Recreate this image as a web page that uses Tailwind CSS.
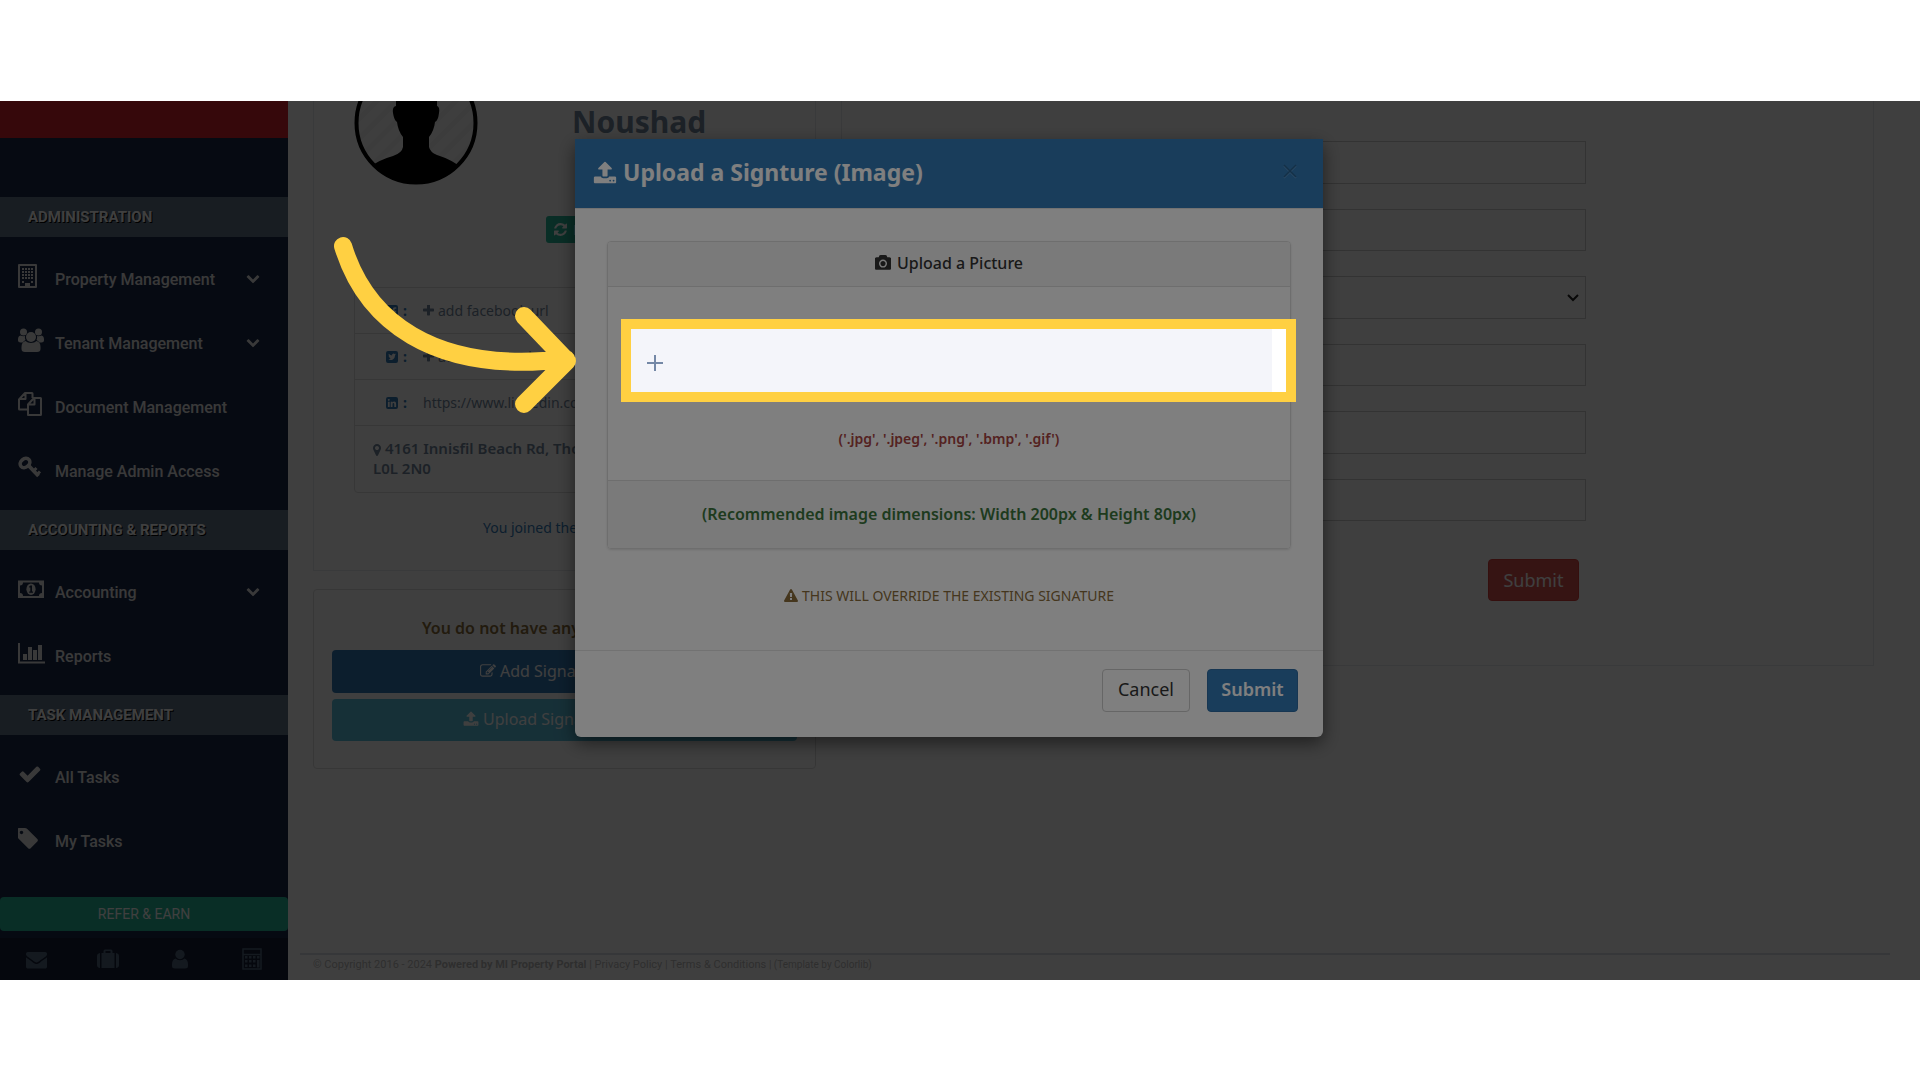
<!DOCTYPE html>
<html lang="en">
<head>
  <meta charset="UTF-8" />
  <meta name="viewport" content="width=device-width, initial-scale=1.0"/>
  <title>MI Property Portal</title>
  <script src="https://cdn.jsdelivr.net/npm/@tailwindcss/browser@4"></script>
</head>
<body class="bg-white py-[101px] font-['Noto_Sans',sans-serif] text-[14px] text-[#73879c]">

  <!-- Icons -->
  <svg class="hidden">
    <symbol id="i-upload" viewBox="0 0 1792 1792"><path d="M1344 1472q0-26-19-45t-45-19-45 19-19 45 19 45 45 19 45-19 19-45zm256 0q0-26-19-45t-45-19-45 19-19 45 19 45 45 19 45-19 19-45zm128-224v320q0 40-28 68t-68 28h-1472q-40 0-68-28t-28-68v-320q0-40 28-68t68-28h427q21 56 70.500 92t110.500 36h256q61 0 110.500-36t70.500-92h427q40 0 68 28t28 68zm-325-648q-17 40-59 40h-256v448q0 26-19 45t-45 19h-256q-26 0-45-19t-19-45v-448h-256q-42 0-59-40-17-39 14-69l448-448q18-19 45-19t45 19l448 448q31 30 14 69z"/></symbol>
    <symbol id="i-camera" viewBox="0 0 1792 1792"><path d="M896 672q119 0 203.500 84.500t84.500 203.500-84.500 203.500-203.500 84.500-203.500-84.500-84.500-203.500 84.500-203.500 203.500-84.500zm704-416q106 0 181 75t75 181v896q0 106-75 181t-181 75h-1408q-106 0-181-75t-75-181v-896q0-106 75-181t181-75h224l51-136q19-49 69.500-84.500t103.500-35.500h512q53 0 103.500 35.500t69.500 84.500l51 136h224zm-704 1152q185 0 316.500-131.500t131.500-316.500-131.500-316.500-316.500-131.500-316.500 131.500-131.500 316.500 131.500 316.500 316.500 131.500z"/></symbol>
    <symbol id="i-warning" viewBox="0 0 1792 1792"><path d="M1024 1375v-190q0-14-9.500-23.500t-22.500-9.500h-192q-13 0-22.500 9.500t-9.500 23.500v190q0 14 9.500 23.500t22.500 9.500h192q13 0 22.500-9.500t9.500-23.500zm-2-374l18-459q0-12-10-19-13-11-24-11h-220q-11 0-24 11-10 7-10 21l17 457q0 10 10 16.500t24 6.500h185q14 0 23.500-6.500t10.500-16.500zm-14-934l768 1408q35 63-2 126-17 29-46.500 46t-63.500 17h-1536q-34 0-63.500-17t-46.500-46q-37-63-2-126l768-1408q17-31 47-49t65-18 65 18 47 49z"/></symbol>
    <symbol id="i-check" viewBox="0 0 1792 1792"><path d="M1671 566q0 40-28 68l-724 724-136 136q-28 28-68 28t-68-28l-136-136-362-362q-28-28-28-68t28-68l136-136q28-28 68-28t68 28l294 295 656-657q28-28 68-28t68 28l136 136q28 28 28 68z"/></symbol>
    <symbol id="i-tag" viewBox="192 128 1536 1536"><path d="M576 448q0-53-37.500-90.500t-90.500-37.500-90.500 37.500-37.500 90.500 37.500 90.500 90.500 37.500 90.500-37.500 37.500-90.500zm1067 576q0 53-37 90l-491 492q-39 37-91 37-53 0-90-37l-715-716q-38-37-64.500-101t-26.500-117v-416q0-52 38-90t90-38h416q53 0 117 26.500t102 64.500l715 714q37 39 37 91z"/></symbol>
    <symbol id="i-mail" viewBox="0 0 1792 1792"><path d="M1792 710v794q0 66-47 113t-113 47h-1472q-66 0-113-47t-47-113v-794q44 49 101 87 362 246 497 345 57 42 92.500 65.500t94.500 48 110 24.500h2q51 0 110-24.500t94.500-48 92.500-65.500q170-123 498-345 57-39 100-87zm0-294q0 79-49 151t-122 123q-376 261-468 325-10 7-42.500 31t-54 38.500-52 32.500-57.500 27-50 9h-2q-23 0-50-9t-57.500-27-52-32.500-54-38.500-42.500-31q-91-64-262-182.500t-205-142.500q-62-42-117-115.500t-55-136.500q0-78 41.500-130t118.500-52h1472q65 0 112.500 47t47.500 113z"/></symbol>
    <symbol id="i-down" viewBox="0 0 1792 1792"><path d="M1683 808l-742 741q-19 19-45 19t-45-19l-742-741q-19-19-19-45.500t19-45.500l166-165q19-19 45-19t45 19l531 531 531-531q19-19 45-19t45 19l166 165q19 19 19 45.500t-19 45.500z"/></symbol>
    <symbol id="i-marker" viewBox="384 128 1024 1536"><path d="M1152 640q0-106-75-181t-181-75-181 75-75 181 75 181 181 75 181-75 75-181zm256 0q0 109-33 179l-364 774q-16 33-47.500 52t-67.500 19-67.500-19-46.500-52l-365-774q-33-70-33-179 0-212 150-362t362-150 362 150 150 362z"/></symbol>
    <symbol id="i-edit" viewBox="0 0 1792 1792"><path d="M888 1184l116-116-152-152-116 116v56h96v96h56zm440-720q-16-16-33 1l-350 350q-17 17-1 33t33-1l350-350q17-17 1-33zm80 594v190q0 119-84.500 203.500t-203.500 84.500h-832q-119 0-203.500-84.500t-84.500-203.500v-832q0-119 84.500-203.500t203.500-84.500h832q63 0 117 25 15 7 18 23 3 17-9 29l-49 49q-14 14-32 8-23-6-45-6h-832q-66 0-113 47t-47 113v832q0 66 47 113t113 47h832q66 0 113-47t47-113v-126q0-13 9-22l64-64q15-15 35-7t20 29zm-96-738l288 288-672 672h-288v-288zm444 132l-92 92-288-288 92-92q28-28 68-28t68 28l152 152q28 28 28 68t-28 68z"/></symbol>
    <symbol id="i-refresh" viewBox="128 128 1536 1536"><path d="M1639 1056q0 5-1 7-64 268-268 434.500t-478 166.500q-146 0-282.500-55t-243.500-157l-129 129q-19 19-45 19t-45-19-19-45v-448q0-26 19-45t45-19h448q26 0 45 19t19 45-19 45l-137 137q71 66 161 102t187 36q134 0 250-65t186-179q11-17 53-117 8-23 30-23h192q13 0 22.500 9.500t9.500 22.500zm25-800v448q0 26-19 45t-45 19h-448q-26 0-45-19t-19-45 19-45l138-138q-148-137-349-137-134 0-250 65t-186 179q-11 17-53 117-8 23-30 23h-199q-13 0-22.500-9.500t-9.500-22.500v-7q65-268 270-434.500t480-166.500q146 0 284 55.500t245 156.500l130-129q19-19 45-19t45 19 19 45z"/></symbol>
    <symbol id="i-plus" viewBox="192 192 1408 1408"><path d="M1600 736v192q0 40-28 68t-68 28h-416v416q0 40-28 68t-68 28h-192q-40 0-68-28t-28-68v-416h-416q-40 0-68-28t-28-68v-192q0-40 28-68t68-28h416v-416q0-40 28-68t68-28h192q40 0 68 28t28 68v416h416q40 0 68 28t28 68z"/></symbol>
    <symbol id="i-building" viewBox="0 0 28 24"><path fill-rule="evenodd" d="M1 0h17q1 0 1 1v22q0 1-1 1h-17q-1 0-1-1v-22q0-1 1-1zM2 2v20h5v-3h5v3h5v-20z"/><path d="M4 4h2v2h-2zM7 4h2v2h-2zM10 4h2v2h-2zM13 4h2v2h-2zM4 7h2v2h-2zM7 7h2v2h-2zM10 7h2v2h-2zM13 7h2v2h-2zM4 10h2v2h-2zM7 10h2v2h-2zM10 10h2v2h-2zM13 10h2v2h-2zM4 13h2v2h-2zM7 13h2v2h-2zM10 13h2v2h-2zM13 13h2v2h-2zM4 17h2v2h-2zM13 17h2v2h-2z"/></symbol>
    <symbol id="i-users" viewBox="0 0 28 24"><circle cx="5.500" cy="4" r="3.500"/><circle cx="20.500" cy="4" r="3.500"/><circle cx="13" cy="9" r="5"/><path d="M7.500 13q-4 1-4 6v2q0 3 3.500 3h12q3.500 0 3.500-3v-2q0-5-4-6-2 2-5.500 2t-5.500-2zM2.500 7.500q-2.500 .5-2.500 4v1q0 2 2.500 2h2q1-1.500 3-2.500-1-2-.5-4-2.500 .5-4.500-.5zM23.500 7.500q2.500 .5 2.500 4v1q0 2-2.500 2h-2q-1-1.500-3-2.500 1-2 .5-4 2.500 .5 4.500-.5z"/></symbol>
    <symbol id="i-files" viewBox="0 0 28 24"><path fill="none" stroke="currentColor" stroke-width="2" stroke-linejoin="round" d="M9 17.500h-7.500q-.5 0-.5-.5v-9.500l6-6.500h7q.5 0 .5.500v4.500M7.500 1.500v5.500h-6M10 23v-10.500l6-6.500h6.500q.5 0 .5.500v16q0 .5-.5.500h-12.500zM16.500 6.500v6h-6"/></symbol>
    <symbol id="i-key" viewBox="0 0 28 24"><path fill="none" stroke="currentColor" stroke-width="3.800" d="M11 10l9.500 10"/><path fill="none" stroke="currentColor" stroke-width="3" d="M15 15.500l3.500-3.500M18.500 19l3.500-3.500"/><ellipse cx="7" cy="7" rx="5.200" ry="4.200" transform="rotate(-40 7 7)" fill="none" stroke="currentColor" stroke-width="3.600"/></symbol>
    <symbol id="i-money" viewBox="0 0 28 24"><path fill-rule="evenodd" d="M0 3.500h26v17.500h-26zM5 5.500q0 3-3 3v7.500q3 0 3 3h16q0-3 3-3v-7.500q-3 0-3-3z"/><ellipse cx="13" cy="12.200" rx="4.600" ry="5.800"/><path d="M12.400 8.500h1.600v6h1v1.300h-3.800v-1.300h1.100v-4h-1.100v-1z" fill="#182848"/></symbol>
    <symbol id="i-chart" viewBox="0 0 28 24"><path d="M0 2h2v18.500h25v2h-27zM5 13h4v6h-4zM10 6h4v13h-4zM15 9h4v10h-4zM20 4h4v15h-4z"/></symbol>
    <symbol id="i-suitcase" viewBox="0 0 22 20"><path d="M3 4v15q-3-.5-3-3v-9q0-2.500 3-3zM19 4v15q3-.5 3-3v-9q0-2.500-3-3z"/><path fill-rule="evenodd" d="M4.500 4h2v-2q0-1.500 1.500-1.500h6q1.500 0 1.500 1.500v2h2v15h-13zM8.500 4h5v-2h-5z"/></symbol>
    <symbol id="i-user" viewBox="0 0 16 20"><circle cx="8" cy="5.500" r="4.700"/><path d="M3.500 9.500q-3.500 1-3.500 6v1.500q0 2.500 3 2.500h10q3 0 3-2.500v-1.500q0-5-3.500-6-1.500 1.800-4.500 1.800t-4.500-1.800z"/></symbol>
    <symbol id="i-calc" viewBox="0 0 20 22"><path fill="none" stroke="currentColor" stroke-width="1.500" d="M1 1h18v20h-18zM1 6.500h18"/><path d="M3 8h2.500v2.500h-2.500zM7 8h2.500v2.500h-2.500zM11 8h2.500v2.500h-2.500zM15 8h2.500v2.500h-2.500zM3 12h2.500v2.500h-2.500zM7 12h2.500v2.500h-2.500zM11 12h2.500v2.500h-2.500zM15 12h2.500v7.500h-2.500zM3 16.500h2.500v2.500h-2.500zM7 16.500h2.500v2.500h-2.500zM11 16.500h2.500v2.500h-2.500z"/></symbol>
    <symbol id="i-facebook" viewBox="0 0 12 12"><path fill-rule="evenodd" d="M2 0h8q2 0 2 2v8q0 2-2 2h-1.500v-4.500h1.500l.2-1.800h-1.700v-1q0-.9.900-.9h.9v-1.600h-1.400q-2.200 0-2.200 2.300v1.200h-1.500v1.800h1.500v4.500h-4.700q-2 0-2-2v-8q0-2 2-2z"/></symbol>
    <symbol id="i-twitter" viewBox="0 0 12 12"><path fill-rule="evenodd" d="M2 0h8q2 0 2 2v8q0 2-2 2h-8q-2 0-2-2v-8q0-2 2-2zM10 3.300l-1 .1.600-.8-1 .4q-1.200-1-2.300.2-.4.500-.2 1.200-2-.1-3.300-1.700-.7 1.300.5 2.200l-.7-.2q0 1.200 1.300 1.600h-.7q.3 1 1.500 1.200-1 .8-2.400.7 2.300 1.300 4.500.2 2.200-1.300 2.300-4.200z"/></symbol>
    <symbol id="i-linkedin" viewBox="0 0 12 12"><path fill-rule="evenodd" d="M2 0h8q2 0 2 2v8q0 2-2 2h-8q-2 0-2-2v-8q0-2 2-2zM1.900 4.700v5.300h1.800v-5.300zM2.800 2a.9.900 0 1 0 .01 0zM4.700 4.700v5.300h1.800v-3q0-1 .9-1t.9 1.200v2.800h1.800v-3.200q0-2.200-1.900-2.200-1.100 0-1.700.9v-.8z"/></symbol>
  </svg>

  <div class="relative flex overflow-hidden bg-white">

    <!-- Sidebar -->
    <nav class="w-[288px] shrink-0 bg-[#182848] font-['Roboto',sans-serif] text-[16px] font-medium text-[#e7e7e7]">
      <div class="h-[37px] bg-[#d8202c]"></div>
      <h3 class="mt-[59px] flex h-10 items-center bg-[#60748a] pl-7 text-[15px] font-bold text-white [text-shadow:1px_1px_#000]">ADMINISTRATION</h3>
      <ul class="pt-[11px] pb-[6px]">
        <li><a href="#" class="flex h-16 items-center pl-[18px]"><svg class="mb-2 mr-[9px] h-6 w-7 fill-current"><use href="#i-building"/></svg>Property Management<svg class="mb-1 ml-auto mr-7 size-[14px] fill-current"><use href="#i-down"/></svg></a></li>
        <li><a href="#" class="flex h-16 items-center pl-[18px]"><svg class="mb-2 mr-[9px] h-6 w-7 fill-current"><use href="#i-users"/></svg>Tenant Management<svg class="mb-1 ml-auto mr-7 size-[14px] fill-current"><use href="#i-down"/></svg></a></li>
        <li><a href="#" class="flex h-16 items-center pl-[18px]"><svg class="mb-2 mr-[9px] h-6 w-7 fill-current"><use href="#i-files"/></svg>Document Management</a></li>
        <li><a href="#" class="flex h-16 items-center pl-[18px]"><svg class="mb-2 mr-[9px] h-6 w-7 fill-current"><use href="#i-key"/></svg>Manage Admin Access</a></li>
      </ul>
      <h3 class="flex h-10 items-center bg-[#60748a] pl-7 text-[15px] font-bold text-white [text-shadow:1px_1px_#000]">ACCOUNTING &amp; REPORTS</h3>
      <ul class="pt-[11px] pb-[6px]">
        <li><a href="#" class="flex h-16 items-center pl-[18px]"><svg class="mb-2 mr-[9px] h-6 w-7 fill-current"><use href="#i-money"/></svg>Accounting<svg class="mb-1 ml-auto mr-7 size-[14px] fill-current"><use href="#i-down"/></svg></a></li>
        <li><a href="#" class="flex h-16 items-center pl-[18px]"><svg class="mb-2 mr-[9px] h-6 w-7 fill-current"><use href="#i-chart"/></svg>Reports</a></li>
      </ul>
      <h3 class="flex h-10 items-center bg-[#60748a] pl-7 text-[15px] font-bold text-white [text-shadow:1px_1px_#000]">TASK MANAGEMENT</h3>
      <ul class="pt-[11px] pb-[6px]">
        <li><a href="#" class="flex h-16 items-center pl-[18px]"><svg class="mb-2 mr-[13px] size-6 fill-current"><use href="#i-check"/></svg>All Tasks</a></li>
        <li><a href="#" class="flex h-16 items-center pl-[18px]"><svg class="mb-2 mr-4 size-[21px] fill-current"><use href="#i-tag"/></svg>My Tasks</a></li>
      </ul>
      <a href="#" class="mt-[17px] flex h-[34px] items-center justify-center rounded bg-[#26b99a] text-[14px] font-normal text-white">REFER &amp; EARN</a>
      <div class="mt-[7px] grid h-[42px] grid-cols-4 place-items-center bg-[#141c34] text-[#51677f]">
        <a href="#" aria-label="Mail"><svg class="size-[21px] fill-current"><use href="#i-mail"/></svg></a>
        <a href="#" aria-label="Portfolio"><svg class="h-5 w-[22px] fill-current"><use href="#i-suitcase"/></svg></a>
        <a href="#" aria-label="Profile"><svg class="h-5 w-4 fill-current"><use href="#i-user"/></svg></a>
        <a href="#" aria-label="Calculator"><svg class="h-[22px] w-5 fill-current"><use href="#i-calc"/></svg></a>
      </div>
    </nav>

    <!-- Page content -->
    <main class="flex min-w-0 flex-1 flex-col pl-[25px]">
      <div class="flex items-start gap-[25px] pr-[46px]">
        <div class="w-[503px] shrink-0">
          <section class="h-[470px] border border-t-0 border-[#e6e9ed] px-10">
            <div class="flex h-[114px]">
              <svg class="h-[84px] w-[124px] shrink-0" viewBox="0 40 124 84">
                <defs>
                  <clipPath id="face"><circle cx="62" cy="62" r="60"/></clipPath>
                  <pattern id="lines" width="14" height="14" patternUnits="userSpaceOnUse" patternTransform="rotate(45)"><rect width="14" height="14" fill="#fbfbfb"/><rect width="5" height="14" fill="#f0f0f0"/></pattern>
                </defs>
                <g clip-path="url(#face)">
                  <rect width="124" height="124" fill="url(#lines)"/>
                  <path d="M42 30h41v15q3 1 2 7-1 8-4 9-1 9-6 15v10q1 5 8 8 16 5 26 14v20h-96v-20q11-9 26-13 9-3 10-9v-10q-5-6-6-15-3-2-4-9-1-6 3-7z" fill="#000"/>
                </g>
                <circle cx="62" cy="62" r="59.500" fill="none" stroke="#000" stroke-width="4"/>
              </svg>
              <h2 class="ml-[94px] text-[30px] font-bold leading-[42px] text-[#73879c]">Noushad</h2>
            </div>
            <a href="#" class="ml-[192px] mt-[1px] flex h-[27px] w-[120px] items-center gap-[6px] rounded-[3px] bg-[#26b99a] pl-2 text-white"><svg class="size-[13px] fill-current"><use href="#i-refresh"/></svg>Edit Profile</a>
            <ul class="mt-11 overflow-hidden rounded-b border border-[#ddd]">
              <li class="flex h-[46px] items-center border-b border-[#ddd] pl-[31px]"><svg class="size-3 fill-[#337ab7]"><use href="#i-facebook"/></svg><b class="w-[25px] pl-[5px] text-[#337ab7]">:</b><svg class="mr-1 size-[11px] fill-current"><use href="#i-plus"/></svg>add facebook url</li>
              <li class="flex h-[46px] items-center border-b border-[#ddd] pl-[31px]"><svg class="size-3 fill-[#337ab7]"><use href="#i-twitter"/></svg><b class="w-[25px] pl-[5px] text-[#337ab7]">:</b><svg class="mr-1 size-[11px] fill-current"><use href="#i-plus"/></svg>add twitter url</li>
              <li class="flex h-[46px] items-center border-b border-[#ddd] pl-[31px]"><svg class="size-3 fill-[#337ab7]"><use href="#i-linkedin"/></svg><b class="w-[25px] pl-[5px] text-[#337ab7]">:</b>https://www.linkedin.com</li>
              <li class="h-[66px] pl-[18px] pt-3 text-[15px] font-semibold leading-5"><svg class="mr-1 inline h-3 w-2 fill-current"><use href="#i-marker"/></svg>4161 Innisfil Beach Rd, Thornton, ON<br>L0L 2N0</li>
            </ul>
            <p class="pl-[129px] pt-6 text-[#337ab7]">You joined the portal</p>
          </section>
          <section class="mt-[18px] h-[180px] rounded border border-[#ddd] px-[18px] pt-[26px]">
            <p class="pl-[90px] text-[16px] font-semibold leading-[25px] text-[#8a6d3b]">You do not have any signature</p>
            <button type="button" class="mt-[9px] flex h-[43px] w-full items-center gap-1 rounded bg-[#337ab7] pb-[2px] pl-[148px] text-[16px] text-white"><svg class="size-4 fill-current"><use href="#i-edit"/></svg>Add Signature</button>
            <button type="button" class="mt-[6px] flex h-[42px] w-full items-center gap-1 rounded bg-[#5bc0de] pb-[2px] pl-[131px] text-[16px] text-white"><svg class="size-4 fill-current"><use href="#i-upload"/></svg>Upload Signature</button>
          </section>
        </div>

        <form class="h-[565px] flex-1 border border-t-0 border-[#e6e9ed] pl-[258px] pr-[287px] pt-10">
          <div class="flex flex-col gap-[25px]">
            <input type="text" aria-label="First name" class="h-[43px] border border-[#ccc]">
            <input type="text" aria-label="Last name" class="h-[42px] border border-[#ccc]">
            <div class="relative">
              <select aria-label="Country" class="h-[43px] w-full appearance-none border border-[#ccc]"><option></option></select>
              <svg class="pointer-events-none absolute right-[7px] top-[18px] h-2 w-3" viewBox="0 0 12 8"><path d="M1 1l5 5 5-5" fill="none" stroke="#222" stroke-width="2"/></svg>
            </div>
            <input type="text" aria-label="Phone" class="h-[42px] border border-[#ccc]">
            <input type="text" aria-label="Email" class="h-[43px] border border-[#ccc]">
            <input type="text" aria-label="Address" class="h-[42px] border border-[#ccc]">
          </div>
          <div class="flex justify-end pr-[7px] pt-[38px]">
            <button type="submit" class="h-[42px] w-[91px] rounded border border-[#d43f3a] bg-[#d9534f] text-[18px] text-white">Submit</button>
          </div>
        </form>
      </div>
      <footer class="-ml-[13px] mr-[30px] mt-auto h-[27px] border-t-2 border-[#d9dee4] pl-[13px] font-['Roboto',sans-serif] text-[11px] leading-[20px] text-[#bbb]">
        © Copyright 2016 - 2024 <b>Powered by MI Property Portal</b> | <a href="#">Privacy Policy</a> | <a href="#">Terms &amp; Conditions</a> <small class="text-[10px]">| (Template by Colorlib)</small>
      </footer>
    </main>

    <div class="absolute inset-0 bg-black/50"></div>

    <!-- Upload dialog -->
    <div class="absolute inset-0 flex items-start justify-center pr-[22px] pt-[38px]">
      <div role="dialog" aria-labelledby="dialog-title" class="w-[748px] rounded-md bg-white shadow-[0_6px_18px_rgba(0,0,0,0.5)]">
        <div class="flex h-[70px] items-center border-b border-[#e5e5e5] bg-[#337ab7] pb-[2px] pl-[18px] pr-[25px]">
          <svg class="mr-[6px] size-6 fill-white"><use href="#i-upload"/></svg>
          <h4 id="dialog-title" class="text-[23px] font-bold text-white">Upload a Signture (Image)</h4>
          <button type="button" aria-label="Close" class="mb-1 ml-auto"><svg class="size-4" viewBox="0 0 16 16"><path d="M2 3l12 12M14 3l-12 12" stroke="#5b95c8" stroke-width="1.500"/><path d="M2 2l12 12M14 2l-12 12" stroke="#29618f" stroke-width="1.500"/></svg></button>
        </div>
        <div class="px-8 pt-8">
          <div class="overflow-hidden rounded border border-[#ddd] text-center shadow-sm">
            <div class="flex h-[45px] items-center justify-center gap-[6px] border-b border-[#ddd] bg-[#f5f5f5] pb-[2px] text-[16px] font-medium text-[#333]"><svg class="size-4 fill-current"><use href="#i-camera"/></svg>Upload a Picture</div>
            <div class="h-[193px] px-[18px] pt-[39px]">
              <label class="flex h-[74px] cursor-pointer items-center bg-[#f4f5fa] pl-5">
                <svg class="size-[18px]" viewBox="0 0 18 18"><path d="M9 1v16M1 9h16" stroke="#7488a6" stroke-width="2"/></svg>
                <input type="file" accept=".jpg,.jpeg,.png,.bmp,.gif" aria-label="Choose a picture" class="sr-only">
              </label>
              <p class="pt-7 font-semibold text-[#a94442]">('.jpg', '.jpeg', '.png', '.bmp', '.gif')</p>
            </div>
            <div class="flex h-[68px] items-center justify-center border-t border-[#ddd] bg-[#f5f5f5] pb-[2px] text-[16px] font-semibold text-[#3c763d]">(Recommended image dimensions: Width 200px &amp; Height 80px)</div>
          </div>
          <p class="flex h-[101px] items-center justify-center gap-1 pb-2 text-[#8a6d3b]"><svg class="size-[14px] fill-current"><use href="#i-warning"/></svg>THIS WILL OVERRIDE THE EXISTING SIGNATURE</p>
        </div>
        <div class="flex h-[87px] items-start justify-end gap-[17px] border-t border-[#e5e5e5] pr-[25px] pt-[18px] text-[18px]">
          <button type="button" class="h-[43px] w-[88px] rounded border border-[#ccc] bg-white pb-[2px] text-[#333]">Cancel</button>
          <button type="submit" class="h-[43px] w-[91px] rounded border border-[#2e6da4] bg-[#337ab7] pb-[2px] font-semibold text-white">Submit</button>
        </div>
      </div>
    </div>

    <!-- Highlight round the file field -->
    <div class="pointer-events-none absolute inset-x-0 top-[218px] flex justify-center pr-[3px]">
      <div class="h-[83px] w-[675px] border-10 border-[#ffd042] shadow-[0_0_0_2000px_rgba(0,0,0,0.5)]"></div>
    </div>
    <svg class="pointer-events-none absolute left-[330px] top-[129px] h-[190px] w-[250px]" viewBox="330 230 250 190" fill="none" stroke="#ffd042" stroke-width="18" stroke-linecap="round" stroke-linejoin="round">
      <path d="M343 246C365 318 430 375 566 359M524 316L567 361L524 404"/>
    </svg>
  </div>
</body>
</html>
